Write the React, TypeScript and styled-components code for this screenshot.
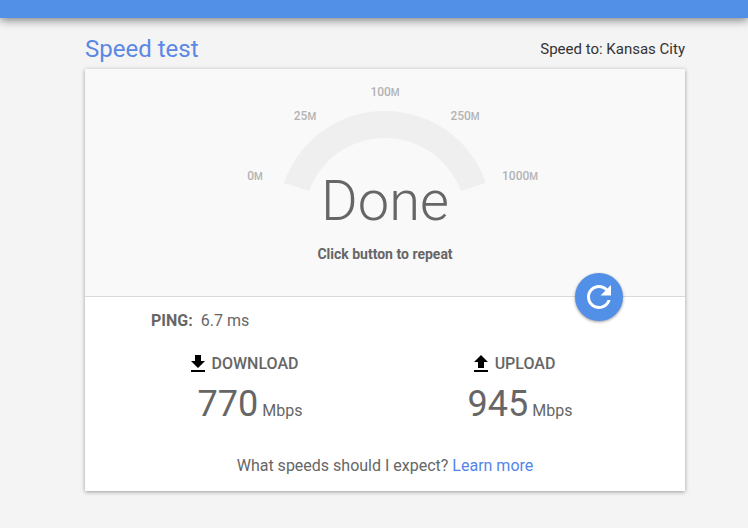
import React from "react";
import styled, { createGlobalStyle } from "styled-components";

const GlobalStyle = createGlobalStyle`
  *, *::before, *::after { box-sizing: border-box; }
  body {
    margin: 0;
    background: #f4f4f4;
    color: #666;
    font-family: Roboto, "Liberation Sans", sans-serif;
    font-size: 16px;
    line-height: 24px;
  }
`;

const TopBar = styled.header`
  height: 18px;
  background: #528fe7;
  box-shadow: 0 2px 10px rgba(0, 0, 0, 0.5);
`;

const Page = styled.main`
  padding: 15px 63px 36px 85px;
`;

const Heading = styled.div`
  display: flex;
  justify-content: space-between;
  align-items: center;
  height: 32px;
  margin-bottom: 4px;
`;

const Title = styled.h1`
  margin: 0;
  font-size: 24px;
  font-weight: 400;
  line-height: 32px;
  color: #5b87e5;
`;

const Server = styled.span`
  font-size: 15px;
  color: #333;
`;

const Card = styled.section`
  background: #fff;
  box-shadow: 0 1px 4px rgba(0, 0, 0, 0.37);
`;

const GaugePanel = styled.div`
  display: flex;
  flex-direction: column;
  align-items: center;
  position: relative;
  height: 228px;
  padding-top: 8px;
  background: #f9f9f9;
  border-bottom: 1px solid #dadada;
`;

const Gauge = styled.svg`
  display: block;
  width: 320px;
  height: 120px;
  flex: none;
  font-size: 12px;
  font-weight: 500;
  fill: #b3b3b3;
`;

const Status = styled.div`
  margin-top: -28px;
  font-size: 56px;
  font-weight: 300;
  line-height: 64px;
`;

const Hint = styled.p`
  margin: 9px 0 0;
  font-size: 14px;
  font-weight: 700;
`;

const RepeatButton = styled.button`
  position: absolute;
  right: 62px;
  bottom: -25px;
  display: flex;
  align-items: center;
  justify-content: center;
  width: 48px;
  height: 48px;
  padding: 0;
  border: 0;
  border-radius: 50%;
  background: #528fe7;
  box-shadow: 0 1px 3px rgba(0, 0, 0, 0.4);
  cursor: pointer;
`;

const Results = styled.div`
  padding: 12px 18px 13px;
`;

const Ping = styled.div`
  display: flex;
  gap: 8px;
  padding-left: 48px;
`;

const Speeds = styled.div`
  display: grid;
  grid-template-columns: 1fr 1fr;
  margin: 19px 12px 0;
`;

const Speed = styled.div`
  display: flex;
  flex-direction: column;
  align-items: center;
`;

const SpeedLabel = styled.div`
  display: flex;
  align-items: center;
  gap: 6px;
  padding-right: 12px;
  font-weight: 500;
`;

const SpeedValue = styled.div`
  display: flex;
  align-items: baseline;
  gap: 4px;
  margin-top: 8px;
  line-height: 40px;
`;

const Amount = styled.span`
  font-size: 36px;
`;

const Bold = styled.span`
  font-weight: 700;
`;

const Footer = styled.p`
  margin: 23px 0 0;
  text-align: center;
`;

const Link = styled.a`
  color: #5285e8;
  text-decoration: none;
`;

const marks = [
  { value: "0", x: 30, y: 103 },
  { value: "25", x: 80, y: 43 },
  { value: "100", x: 160, y: 19 },
  { value: "250", x: 240, y: 43 },
  { value: "1000", x: 295, y: 103 },
];

const speeds = [
  { label: "DOWNLOAD", amount: 770, icon: "M5 0h6v6h4L8 13 1 6h4zM1 15h14v2H1z" },
  { label: "UPLOAD", amount: 945, icon: "M8 0l7 7h-4v6H5V7H1zM1 15h14v2H1z" },
];

export default function App() {
  return (
    <>
      <GlobalStyle />
      <TopBar />
      <Page>
        <Heading>
          <Title>Speed test</Title>
          <Server>Speed to: Kansas City</Server>
        </Heading>
        <Card>
          <GaugePanel>
            <Gauge viewBox="0 0 320 120" role="img" aria-label="Speed gauge">
              <path
                d="M59 106A106.8 106.8 0 0 1 261 106L236 114A81 81 0 0 0 84 114Z"
                fill="#efefef"
              />
              {marks.map(({ value, x, y }) => (
                <text key={value} x={x} y={y} textAnchor="middle">
                  {value}
                  <tspan fontSize="10">M</tspan>
                </text>
              ))}
            </Gauge>
            <Status>Done</Status>
            <Hint>Click button to repeat</Hint>
            <RepeatButton type="button" aria-label="Repeat the test">
              <svg width="36" height="36" viewBox="0 0 24 24" fill="#fff" aria-hidden="true">
                <path d="M17.65 6.35C16.2 4.9 14.21 4 12 4c-4.42 0-7.99 3.58-7.99 8s3.57 8 7.99 8c3.73 0 6.84-2.55 7.73-6h-2.08c-.82 2.33-3.04 4-5.65 4-3.31 0-6-2.69-6-6s2.69-6 6-6c1.66 0 3.14.69 4.22 1.78L13 11h7V4l-2.35 2.35z" />
              </svg>
            </RepeatButton>
          </GaugePanel>
          <Results>
            <Ping>
              <Bold>PING:</Bold>
              <span>6.7 ms</span>
            </Ping>
            <Speeds>
              {speeds.map(({ label, amount, icon }) => (
                <Speed key={label}>
                  <SpeedLabel>
                    <svg width="16" height="18" viewBox="0 0 16 18" aria-hidden="true">
                      <path d={icon} />
                    </svg>
                    {label}
                  </SpeedLabel>
                  <SpeedValue>
                    <Amount>{amount}</Amount>
                    <span>Mbps</span>
                  </SpeedValue>
                </Speed>
              ))}
            </Speeds>
            <Footer>
              What speeds should I expect? <Link href="#speeds">Learn more</Link>
            </Footer>
          </Results>
        </Card>
      </Page>
    </>
  );
}
